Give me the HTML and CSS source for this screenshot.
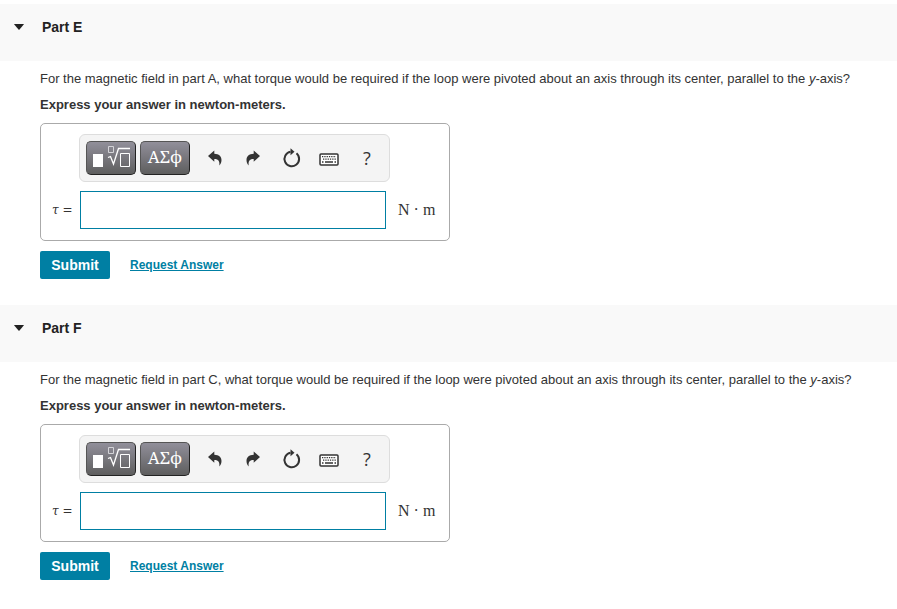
FILE: index.html
```html
<!DOCTYPE html>
<html lang="en">
<head>
<meta charset="utf-8">
<title>Torque on a loop</title>
<link rel="stylesheet" href="styles.css">
</head>
<body>
<svg class="symbols" aria-hidden="true">
  <symbol id="i-template" viewBox="0 0 40 26">
    <path fill="#fff" d="M2 10h10v13H2z"/>
    <path fill="none" stroke="#d4d4d8" d="M17.500 2.500h5v6h-5z"/>
    <path fill="none" stroke="#fff" stroke-width="1.300" d="M17 13.500l2.500-1 3 7.500L27.500 4.500H39"/>
    <path fill="none" stroke="#fff" d="M29.500 9.500h9v13h-9z"/>
  </symbol>
  <symbol id="i-undo" viewBox="0 0 16 16">
    <path fill="#333" d="M1 6L7.300.500v3.300c4.700.2 7.200 2.600 7.200 6.200 0 2-.7 4-2.200 5.500.5-3.900-.5-6.500-5-6.500v2.700z"/>
  </symbol>
  <symbol id="i-reset" viewBox="0 0 20 20">
    <path fill="none" stroke="#333" stroke-width="2" d="M15.500 5.300A7.300 7.300 0 1 1 9.500 3.700"/>
    <path fill="#333" d="M9.500.300L13.500 3.700 9.500 7.300z"/>
  </symbol>
  <symbol id="i-keyboard" viewBox="0 0 20 13">
    <rect x="1" y="1" width="18" height="11" rx="1" fill="#fff" stroke="#333" stroke-width="1.500"/>
    <path fill="none" stroke="#333" stroke-width="1.300" stroke-dasharray="1.300 1" d="M3 3.700h14M4 6.200h13"/>
    <path fill="none" stroke="#333" stroke-width="1.300" d="M3 9h1.500M6 9h8M15.500 9H17"/>
  </symbol>
</svg>

<section class="part">
  <header class="part-header">
    <button class="toggle" aria-label="Collapse Part E"><svg viewBox="0 0 10 6"><path fill="#222" d="M.5 0h9q.7 0 .2.600L5.500 5.500q-.5.500-1 0L.3.600Q-.2 0 .5 0z"/></svg></button>
    <h2>Part E</h2>
  </header>
  <div class="part-body">
    <p>For the magnetic field in part A, what torque would be required if the loop were pivoted about an axis through its center, parallel to the <i>y</i>-axis?</p>
    <p class="instruction">Express your answer in newton-meters.</p>
    <div class="answer-box">
      <div class="toolbar">
        <button class="dark" aria-label="Templates"><svg class="template"><use href="#i-template"/></svg></button>
        <button class="dark">ΑΣϕ</button>
        <button class="tool" aria-label="Undo"><svg class="arrow"><use href="#i-undo"/></svg></button>
        <button class="tool" aria-label="Redo"><svg class="arrow flip"><use href="#i-undo"/></svg></button>
        <button class="tool" aria-label="Reset"><svg class="reset"><use href="#i-reset"/></svg></button>
        <button class="tool" aria-label="Keyboard shortcuts"><svg class="keyboard"><use href="#i-keyboard"/></svg></button>
        <button class="tool">?</button>
      </div>
      <div class="entry">
        <label for="answer-e"><i>τ</i> =</label>
        <input id="answer-e" type="text">
        <span class="unit">N · m</span>
      </div>
    </div>
    <div class="actions"><button class="submit">Submit</button><a href="#">Request Answer</a></div>
  </div>
</section>

<section class="part">
  <header class="part-header">
    <button class="toggle" aria-label="Collapse Part F"><svg viewBox="0 0 10 6"><path fill="#222" d="M.5 0h9q.7 0 .2.600L5.500 5.500q-.5.500-1 0L.3.600Q-.2 0 .5 0z"/></svg></button>
    <h2>Part F</h2>
  </header>
  <div class="part-body">
    <p>For the magnetic field in part C, what torque would be required if the loop were pivoted about an axis through its center, parallel to the <i>y</i>-axis?</p>
    <p class="instruction">Express your answer in newton-meters.</p>
    <div class="answer-box">
      <div class="toolbar">
        <button class="dark" aria-label="Templates"><svg class="template"><use href="#i-template"/></svg></button>
        <button class="dark">ΑΣϕ</button>
        <button class="tool" aria-label="Undo"><svg class="arrow"><use href="#i-undo"/></svg></button>
        <button class="tool" aria-label="Redo"><svg class="arrow flip"><use href="#i-undo"/></svg></button>
        <button class="tool" aria-label="Reset"><svg class="reset"><use href="#i-reset"/></svg></button>
        <button class="tool" aria-label="Keyboard shortcuts"><svg class="keyboard"><use href="#i-keyboard"/></svg></button>
        <button class="tool">?</button>
      </div>
      <div class="entry">
        <label for="answer-f"><i>τ</i> =</label>
        <input id="answer-f" type="text">
        <span class="unit">N · m</span>
      </div>
    </div>
    <div class="actions"><button class="submit">Submit</button><a href="#">Request Answer</a></div>
  </div>
</section>
</body>
</html>
```
FILE: styles.css
```css
* { box-sizing: border-box; }

body {
  margin: 0;
  padding-top: 4px;
  background: #fff;
  color: #333;
  font: 13px/26px "Liberation Sans", Arial, sans-serif;
}

svg { display: block; }
.symbols { display: none; }

button {
  margin: 0;
  padding: 0;
  border: 0;
  background: none;
  color: inherit;
  font: inherit;
  cursor: pointer;
}

.part-header {
  display: flex;
  align-items: center;
  gap: 18px;
  padding: 10px 14px 21px;
  background: #f9f9f9;
  color: #222;
}

.toggle svg { width: 10px; height: 6px; }

h2 {
  margin: 0;
  font-size: 14px;
  line-height: 26px;
}

.part-body { padding: 5px 16px 26px 40px; }

p { margin: 0; }
.instruction { font-weight: bold; }

.answer-box {
  width: fit-content;
  margin-top: 5px;
  padding: 10px 15px 11px 11px;
  border: 1px solid #aaa;
  border-radius: 5px;
}

.toolbar {
  display: flex;
  align-items: center;
  gap: 4px;
  width: fit-content;
  margin-left: 27px;
  padding: 6px 5px 6px 6px;
  border: 1px solid #ddd;
  border-radius: 6px;
  background: #f4f4f4;
}

.dark {
  display: flex;
  align-items: center;
  justify-content: center;
  width: 50px;
  height: 34px;
  padding-bottom: 2px;
  border: 1px solid #555;
  border-right-color: #222;
  border-bottom-color: #222;
  border-radius: 5px;
  background: linear-gradient(#918f9a, #5e5e5e);
  color: #fff;
  font: 17px/26px "Noto Serif", "Liberation Serif", serif;
}

.tool {
  display: flex;
  align-items: center;
  justify-content: center;
  width: 34px;
  height: 34px;
  font-family: "Open Sans", sans-serif;
  font-size: 18px;
}

.tool:nth-child(3) { margin-left: 4px; }
.template { width: 40px; height: 26px; }
.arrow { width: 16px; height: 16px; }
.flip { transform: scaleX(-1); }
.reset { width: 20px; height: 20px; }
.keyboard { width: 20px; height: 13px; margin-top: 2px; }

.entry {
  display: flex;
  align-items: center;
  margin-top: 9px;
}

.entry label {
  width: 28px;
  font: 12px/26px "DejaVu Serif", serif;
  white-space: nowrap;
}

.entry input {
  width: 306px;
  height: 38px;
  padding: 0 8px;
  border: 1px solid #007fa3;
  border-radius: 0;
  background: #fff;
  font: inherit;
}

.unit {
  width: 36px;
  margin-left: 12px;
  font: 16px/26px "Liberation Serif", serif;
  white-space: nowrap;
}

.actions {
  display: flex;
  align-items: center;
  gap: 20px;
  margin-top: 10px;
}

.submit {
  width: 70px;
  height: 28px;
  border-radius: 2px;
  background: #007fa3;
  color: #fff;
  font-size: 14px;
  font-weight: bold;
}

.actions a {
  color: #007fa3;
  font-size: 12px;
  font-weight: bold;
}
```
